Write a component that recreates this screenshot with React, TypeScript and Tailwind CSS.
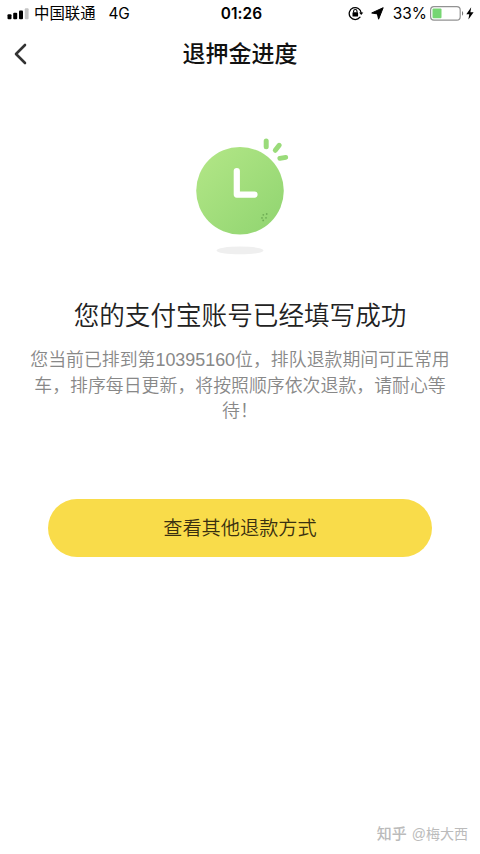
function StatusBar() {
  return (
    <div className="grid h-[27px] grid-cols-[1fr_auto_1fr] items-center pl-[7px] pr-[6px] font-['Inter','Noto_Sans_CJK_SC',sans-serif] text-[15.4px] leading-none text-black">
      <div className="flex items-center">
        <svg width="22" height="12" viewBox="0 0 22 12" className="mr-[5px]">
          <rect x="0.5" y="6.3" width="4" height="5" rx="1" />
          <rect x="6.2" y="4.8" width="4" height="6.5" rx="1" />
          <rect x="12" y="2.6" width="4" height="8.7" rx="1" />
          <rect x="17.8" y="0.2" width="3.8" height="11.1" rx="1" fill="#c4c4c4" />
        </svg>
        <span>中国联通</span>
        <span className="ml-[13px] tracking-[-0.3px]">4G</span>
      </div>
      <span className="pl-[2px] font-semibold tracking-[0.1px]">01:26</span>
      <div className="flex items-center justify-end">
        <svg width="16" height="16" viewBox="0 0 16 16" className="mr-[7px]" fill="none" stroke="#000">
          <path d="M12 11.2A6 6 0 1 1 13.2 7" strokeWidth="1.3" strokeLinecap="round" />
          <path d="M11.1 6.4h4.2l-2.1 2.7z" fill="#000" stroke="none" />
          <rect x="4.5" y="6.3" width="5.6" height="4.2" rx="0.6" fill="#000" stroke="none" />
          <path d="M5.6 6.5V5.2a1.7 1.7 0 0 1 3.4 0v1.3" strokeWidth="1.1" />
        </svg>
        <svg width="13" height="13" viewBox="0 0 13 13" className="mr-[9px]">
          <path d="M12.2 0.7 7.6 12.2 6.4 6.9 0.7 6z" stroke="#000" strokeWidth="1" strokeLinejoin="round" />
        </svg>
        <span>33%</span>
        <svg width="34" height="16" viewBox="0 0 34 16" className="ml-[3px]">
          <rect x="0.6" y="0.6" width="29.6" height="13.6" rx="3.4" fill="#fff" stroke="#929292" strokeWidth="1.2" />
          <rect x="2.5" y="2.6" width="9" height="9.6" rx="1" fill="#76d672" />
          <path d="M32 5c1.6.8 1.6 4 0 4.8z" fill="#777" />
        </svg>
        <svg width="8" height="13" viewBox="0 0 8 13" className="ml-[2px]">
          <path d="M5.2 0.3 0.3 7.2h3L2.4 12.4 7.6 5.2H4.4z" />
        </svg>
      </div>
    </div>
  );
}

function NavBar() {
  return (
    <header className="grid h-[53px] grid-cols-[60px_1fr_60px] items-center">
      <button className="pl-[14px]" aria-label="返回">
        <svg width="14" height="22" viewBox="0 0 14 22" fill="none" stroke="#333" strokeWidth="2.6" strokeLinecap="round" strokeLinejoin="round">
          <path d="M11 2 2 11l9 9" />
        </svg>
      </button>
      <h1 className="pt-[2px] text-center text-[23px] font-medium leading-none text-[#111]">退押金进度</h1>
    </header>
  );
}

function ClockBadge() {
  return (
    <svg width="120" height="140" viewBox="0 0 120 140">
      <defs>
        <linearGradient id="face" x1="0.1" y1="0.1" x2="0.9" y2="0.9">
          <stop offset="0" stopColor="#b0e585" />
          <stop offset="1" stopColor="#93d672" />
        </linearGradient>
      </defs>
      <circle cx="60" cy="65.7" r="43.8" fill="url(#face)" />
      <path d="M56.8 46v23.6H74.5" fill="none" stroke="#fff" strokeWidth="6.2" strokeLinecap="round" strokeLinejoin="round" />
      <g stroke="#9adb7a" strokeWidth="5" strokeLinecap="round">
        <path d="M86.2 16v5.8" />
        <path d="M99.2 20.3 95.3 25.3" />
        <path d="M105.8 32.3l-6 1" strokeWidth="4.8" />
      </g>
      <g fill="#6fae55">
        <circle cx="83.3" cy="89.8" r="0.9" />
        <circle cx="86.7" cy="89" r="0.9" />
        <circle cx="82" cy="92.9" r="0.9" />
        <circle cx="86" cy="92.8" r="0.9" />
        <circle cx="83.2" cy="95.4" r="0.9" />
      </g>
      <ellipse cx="60" cy="125.4" rx="23.5" ry="3.9" fill="#efefef" />
    </svg>
  );
}

export default function App() {
  return (
    <div className="flex h-[854px] w-[480px] flex-col bg-white font-['Liberation_Sans','Noto_Sans_CJK_SC',sans-serif]" lang="zh-CN">
      <StatusBar />
      <NavBar />
      <main className="flex flex-1 flex-col items-center pt-[45px]">
        <ClockBadge />
        <h2 className="mt-[32px] text-[25.6px] font-[350] leading-[38px] text-[#222]">您的支付宝账号已经填写成功</h2>
        <p className="mt-[13px] w-[424px] text-center text-[17.9px] font-[350] leading-[25.6px] text-[#888]">
          您当前已排到第10395160位，排队退款期间可正常用车，排序每日更新，将按照顺序依次退款，请耐心等待！
        </p>
        <button className="mt-[74.7px] h-[57.6px] w-[384px] rounded-full bg-[#f9dc4a] pt-[2px] text-[19.2px] font-[350] text-[#3a3010]">
          查看其他退款方式
        </button>
      </main>
      <footer className="flex justify-end gap-[5px] pb-[10px] pr-[12px] text-[14px] leading-[20px] text-[#bbb]">
        <span className="text-[15px] font-medium">知乎</span>
        <span>@梅大西</span>
      </footer>
    </div>
  );
}
